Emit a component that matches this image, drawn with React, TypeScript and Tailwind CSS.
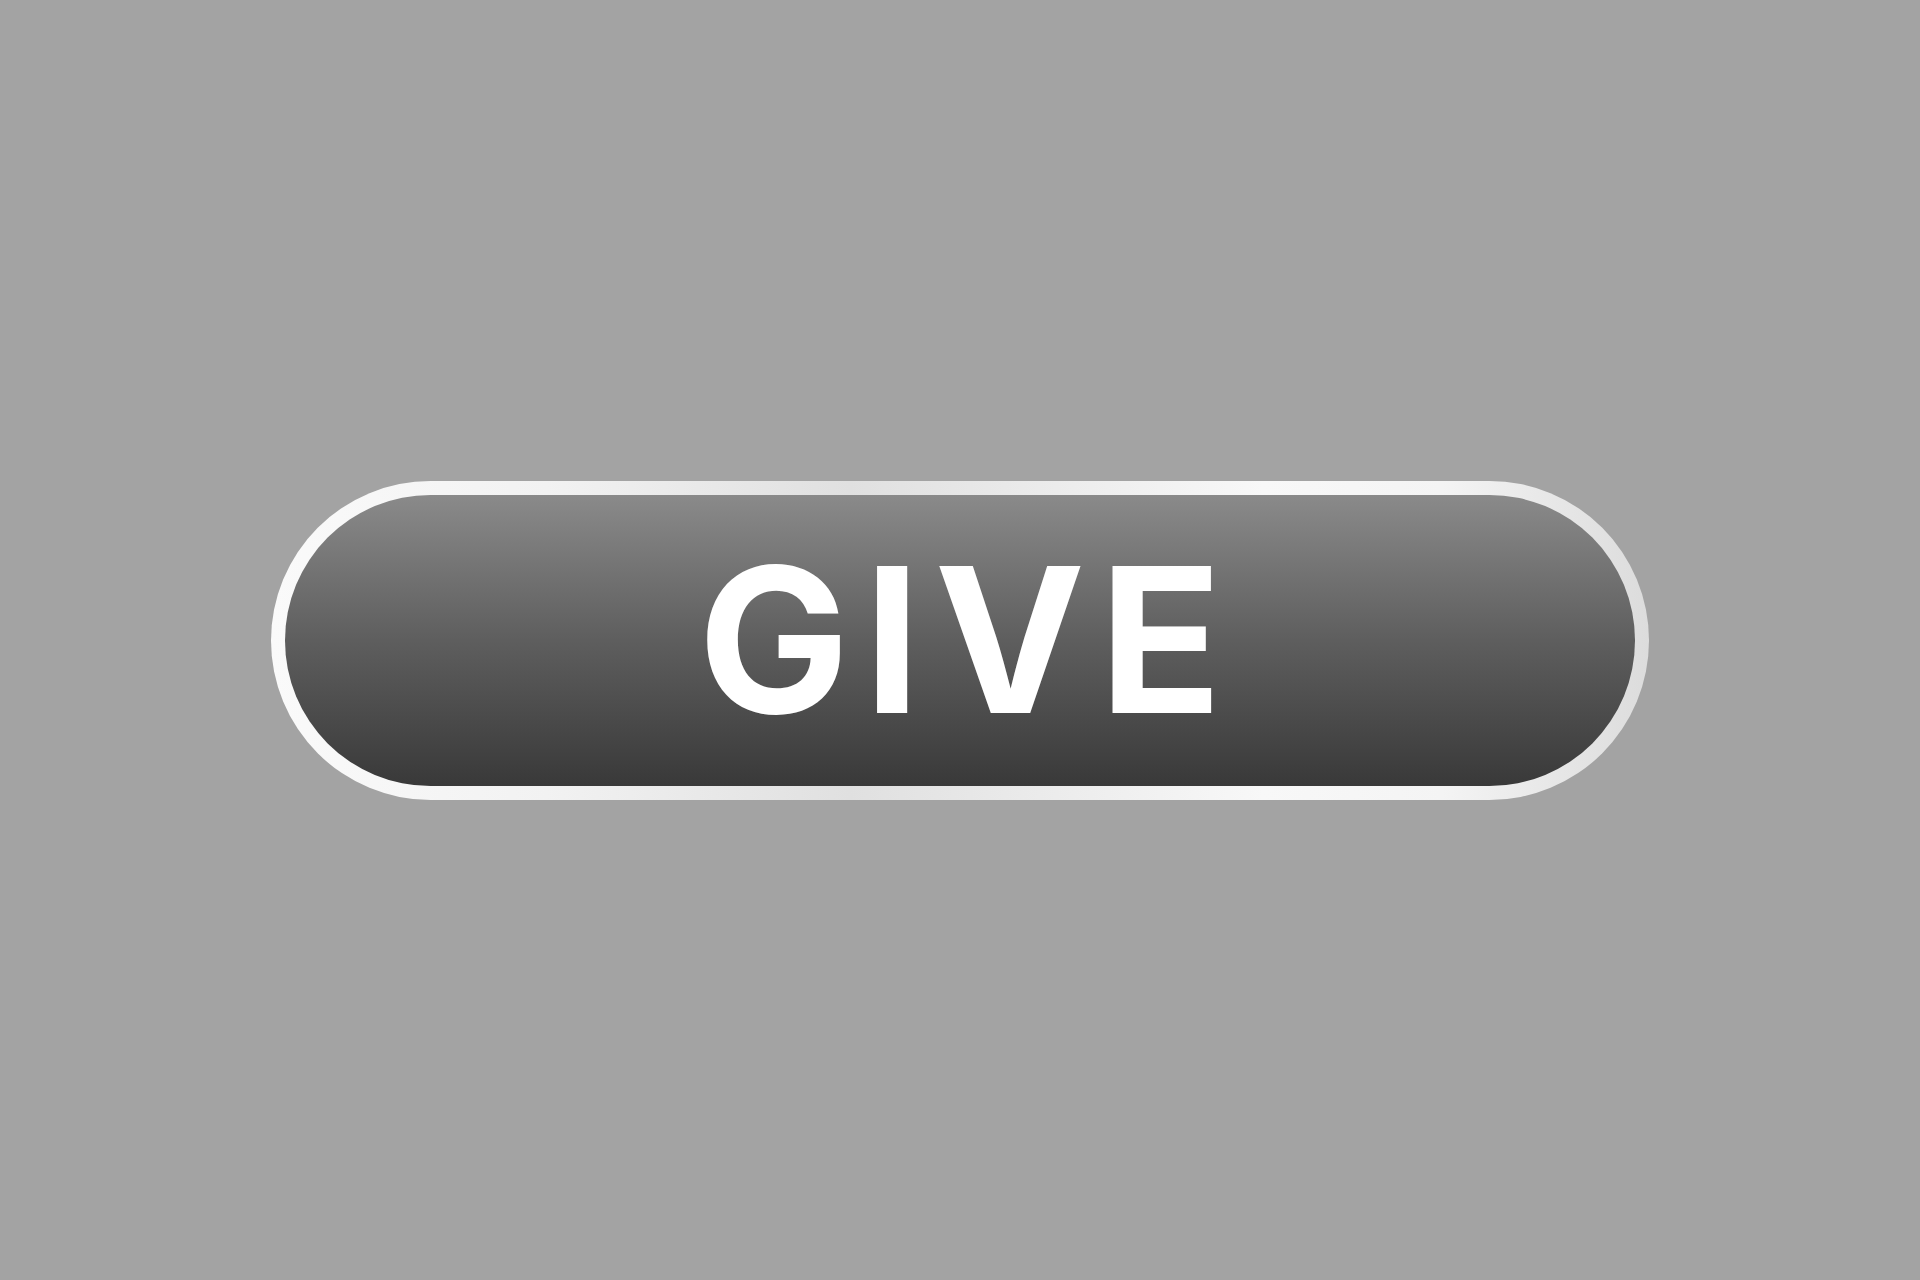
export default function App() {
  return (
    <div className="w-full h-screen bg-[#a3a3a3] flex items-center justify-center">
      {/* Outer ring */}
      <div className="w-[1378px] h-[319px] rounded-full p-[14px] bg-[linear-gradient(to_right,#fafafa_0%,#f2f2f2_20%,#e0e0e0_42%,#f8f8f8_72%,#f4f4f4_85%,#dcdcdc_100%)]">
        {/* Inner pill */}
        <div className="w-full h-full rounded-full bg-[linear-gradient(to_bottom,#8a8a8a_0%,#5e5e5e_50%,#393939_100%)] flex items-center justify-center">
          <span className="text-white font-bold text-[202px] leading-none tracking-[14px] pl-[14px] font-['Inter',sans-serif]">
            GIVE
          </span>
        </div>
      </div>
    </div>
  );
}
